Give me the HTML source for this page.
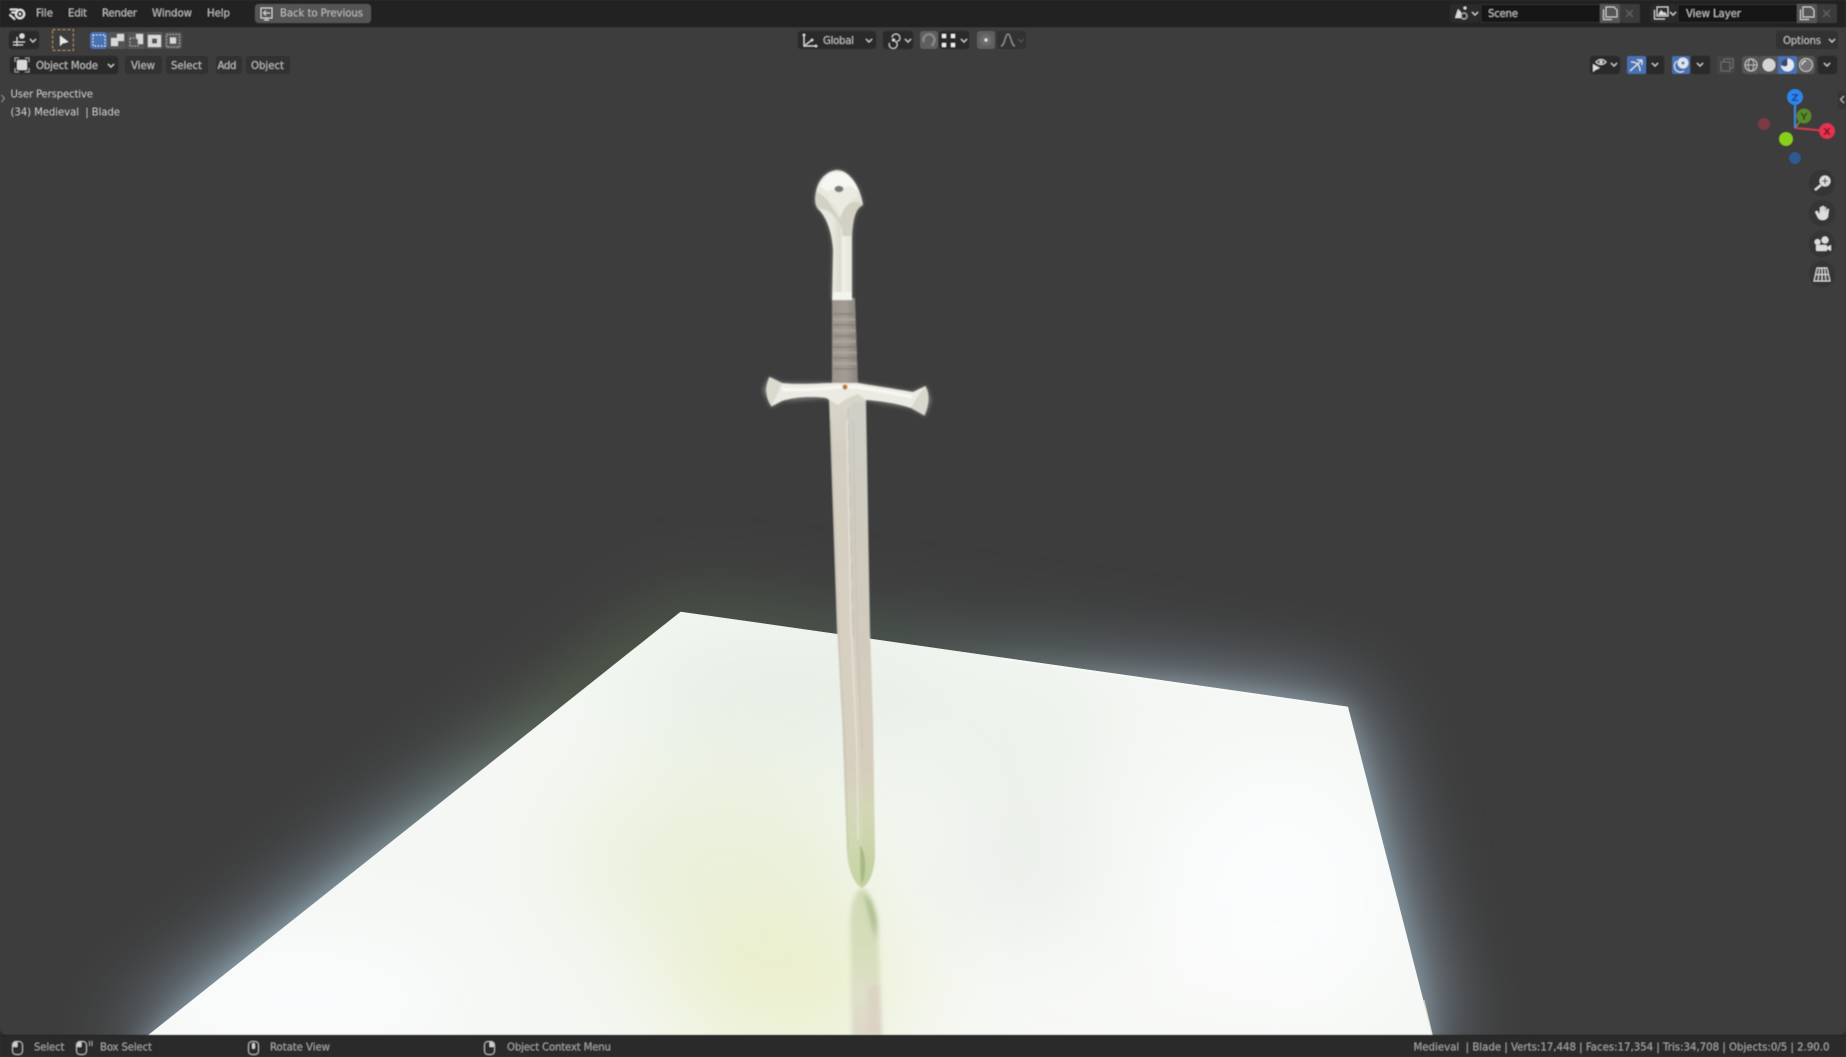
<!DOCTYPE html>
<html><head><meta charset="utf-8"><title>Blender</title>
<style>
html,body{margin:0;padding:0;background:#3d3d3d;width:1846px;height:1057px;overflow:hidden}
svg{display:block}
text{font-family:"DejaVu Sans","Liberation Sans",sans-serif;font-size:10.2px;fill:#bcbcbc}
.st text{fill:#a2a2a2}
.vt{fill:#d4d4d4}
</style></head><body>
<svg xmlns="http://www.w3.org/2000/svg" width="1846" height="1057" viewBox="0 0 1846 1057">
<defs>
<filter id="g38" filterUnits="userSpaceOnUse" x="0" y="0" width="1846" height="1057" color-interpolation-filters="sRGB"><feOffset dy="200"/><feGaussianBlur stdDeviation="44"/></filter>
<filter id="g14" filterUnits="userSpaceOnUse" x="0" y="0" width="1846" height="1057" color-interpolation-filters="sRGB"><feOffset dy="200"/><feGaussianBlur stdDeviation="12"/></filter>
<filter id="b2" x="-30%" y="-30%" width="160%" height="160%"><feGaussianBlur stdDeviation="2.4"/></filter>
<filter id="b1" x="-30%" y="-30%" width="160%" height="160%"><feGaussianBlur stdDeviation="1"/></filter>
<filter id="soft" x="-2%" y="-2%" width="104%" height="104%"><feGaussianBlur stdDeviation="0.5"/></filter>
<filter id="swsoft" x="-10%" y="-10%" width="120%" height="120%"><feGaussianBlur stdDeviation="0.8"/></filter>
<filter id="blob" x="-100%" y="-100%" width="300%" height="300%"><feGaussianBlur stdDeviation="50"/></filter>
<clipPath id="plane"><path d="M680.6 611.7L1348 706.7L1432.5 1036L147 1036Z"/></clipPath>
<clipPath id="view"><rect x="0" y="27" width="1846" height="1009"/></clipPath>
<linearGradient id="gw" x1="147" y1="0" x2="1432" y2="0" gradientUnits="userSpaceOnUse">
<stop offset="0" stop-color="#b6d2e6"/><stop offset=".2" stop-color="#a2bfcf"/><stop offset=".33" stop-color="#66785e"/><stop offset=".45" stop-color="#566550"/><stop offset=".62" stop-color="#5a6a64"/><stop offset=".8" stop-color="#93a6b3"/><stop offset="1" stop-color="#b0c8da"/></linearGradient>
<linearGradient id="gt" x1="147" y1="0" x2="1432" y2="0" gradientUnits="userSpaceOnUse">
<stop offset="0" stop-color="#a8c4d8"/><stop offset=".2" stop-color="#8ea6aa"/><stop offset=".34" stop-color="#404a3c"/><stop offset=".6" stop-color="#434a46"/><stop offset=".82" stop-color="#b9c6ce"/><stop offset="1" stop-color="#98b0c2"/></linearGradient>
<linearGradient id="bl" x1="0" y1="395" x2="0" y2="890" gradientUnits="userSpaceOnUse">
<stop offset="0" stop-color="#d8d6cc"/><stop offset=".12" stop-color="#d3cdc0"/><stop offset=".55" stop-color="#d7d0c2"/><stop offset=".76" stop-color="#d6cfc0"/><stop offset=".86" stop-color="#d3d9b8"/><stop offset="1" stop-color="#c5d3a2"/></linearGradient>
<linearGradient id="br" x1="0" y1="395" x2="0" y2="890" gradientUnits="userSpaceOnUse">
<stop offset="0" stop-color="#cfcfc8"/><stop offset=".3" stop-color="#cfcbbe"/><stop offset=".76" stop-color="#d6ccbc"/><stop offset=".84" stop-color="#d3d7b4"/><stop offset="1" stop-color="#bfcf9a"/></linearGradient>
<linearGradient id="rf" x1="0" y1="888" x2="0" y2="1036" gradientUnits="userSpaceOnUse">
<stop offset="0" stop-color="#d0dbb6"/><stop offset=".4" stop-color="#d5debb"/><stop offset=".72" stop-color="#dfdfc9"/><stop offset="1" stop-color="#dcd6c8"/></linearGradient>
<linearGradient id="gr" x1="832" y1="0" x2="858" y2="0" gradientUnits="userSpaceOnUse">
<stop offset="0" stop-color="#98938c"/><stop offset=".5" stop-color="#a39c94"/><stop offset="1" stop-color="#8a847c"/></linearGradient>
<linearGradient id="hd" x1="832" y1="0" x2="852" y2="0" gradientUnits="userSpaceOnUse">
<stop offset="0" stop-color="#e8e8df"/><stop offset=".4" stop-color="#dcdbcf"/><stop offset=".55" stop-color="#f1f0e9"/><stop offset="1" stop-color="#e4e3da"/></linearGradient>
</defs>

<rect width="1846" height="1057" fill="#3d3d3d"/>

<!-- glow: source geometry sits 200px above the final place and is shifted by the filter -->
<g clip-path="url(#view)">
<path d="M680.6 411.7L1348 506.7L1432.5 836L1450 950L60 950L147 836Z" fill="url(#gw)" filter="url(#g38)"/>
<path d="M680.6 411.7L1348 506.7L1432.5 836L1450 950L60 950L147 836Z" fill="url(#gt)" filter="url(#g14)" opacity=".45"/>
</g>

<!-- plane -->
<path d="M680.6 611.7L1348 706.7L1432.5 1036L147 1036Z" fill="#f4f7f3"/>
<g clip-path="url(#plane)">
<g filter="url(#blob)">
<ellipse cx="790" cy="690" rx="170" ry="50" fill="#e4ede2"/>
<ellipse cx="1000" cy="720" rx="120" ry="40" fill="#e9efe7"/>
<ellipse cx="720" cy="860" rx="150" ry="90" fill="#eaf0da"/>
<ellipse cx="790" cy="985" rx="130" ry="70" fill="#ebefca"/>
<ellipse cx="1020" cy="860" rx="60" ry="80" fill="#e9ede8"/>
<ellipse cx="1280" cy="900" rx="130" ry="150" fill="#fbfcfd"/>
<ellipse cx="300" cy="1000" rx="170" ry="55" fill="#fdfdff"/>
<ellipse cx="1120" cy="1010" rx="220" ry="40" fill="#f9faf8"/>
</g>
<path d="M1000 657L1348 706.7" stroke="#fff" stroke-width="3" opacity=".6" filter="url(#b1)"/>
</g>
<path d="M1424 1000L1432.5 1036" stroke="#e9edc8" stroke-width="1.2" opacity=".7"/>

<!-- reflection -->
<g filter="url(#b2)">
<path d="M862 888C854 892 851 905 850 920L852 1036L882 1036L878 925C877 905 870 892 862 888Z" fill="url(#rf)"/>
<path d="M864 893C870 898 875 908 877 922L876 940C872 928 868 910 864 893Z" fill="#8aa36c" opacity=".55"/>
<path d="M868 985L880 985L882 1036L868 1036Z" fill="#d9cfc2" opacity=".75"/>
</g>

<!-- sword -->
<g filter="url(#swsoft)">
<path d="M837 170C848 170 860 184 863 205C856 208 853 218 852 236L852 300L832 300L833 250C832 232 826 216 818 209C814 204 815 196 816 192C818 180 826 171 837 170Z" fill="#fff" opacity=".3" filter="url(#b2)"/>
<path d="M769 377L782 383L858 383L913 392L926 386L931 400L925 416L911 408L866 400L845 412L826 398L782 401L771 407L763 390Z" fill="#fff" opacity=".35" filter="url(#b2)"/>

<!-- blade -->
<path d="M829 398L837 630L842 720L847 853C848 870 855 885 862 888L860 720L853 630L848 398Z" fill="url(#bl)"/>
<path d="M848 398L853 630L860 720L862 888C870 883 875 870 875 853L873 720L870 630L866 398Z" fill="url(#br)"/>
<path d="M847 420L851 630L857 750L858 840" stroke="#e8e4da" stroke-width="1.8" fill="none" opacity=".7"/>
<path d="M853 420L857 630L862 750" stroke="#bdb7aa" stroke-width="1" fill="none" opacity=".5"/>
<path d="M831 420L839 640L844 730L848 850" stroke="#c3bdae" stroke-width="1.2" fill="none" opacity=".6"/>
<path d="M860 845C860 860 860 875 861 884C865 878 866 868 865 860C864 852 862 848 860 845Z" fill="#8fa668" opacity=".55"/>

<!-- grip -->
<path d="M832 298L855 298L858 385L832 385Z" fill="url(#gr)"/>
<g stroke="#7f7971" stroke-width="1.6" opacity=".7">
<path d="M833 314L856 314M833 325L856 325M833 336L857 336M833 347L857 347M833 358L857 358M833 369L858 369"/>
</g>
<g stroke="#b4aea6" stroke-width="2.2" opacity=".6">
<path d="M833 319.5L855 319.5M833 330.5L856 330.5M833 341.5L856 341.5M833 352.5L857 352.5M833 363.5L857 363.5"/>
</g>

<!-- pommel and handle -->
<path d="M837 170C848 170 860 184 863 205C856 208 853 218 852 236L852 300L832 300L833 250C832 232 826 216 818 209C814 204 815 196 816 192C818 180 826 171 837 170Z" fill="url(#hd)"/>
<path d="M816 192C824 194 832 204 839 220C842 208 852 196 863 205C856 208 853 218 851 236L842 236C843 230 842 226 838 222C834 214 826 208 818 209C815 204 815 196 816 192Z" fill="#d2d1c3"/>
<path d="M826 190L852 184C856 188 858 194 857 197C850 200 843 208 840 218C836 206 831 197 826 190Z" fill="#ecebe2"/>
<path d="M837 172C846 172 855 180 859 192L851 186L826 191L820 186C824 177 830 172 837 172Z" fill="#f7f7f2"/>
<ellipse cx="839" cy="189" rx="4.5" ry="3.2" fill="#74747a"/>
<path d="M833 292L852 292L852 300L832 300Z" fill="#f4f4ee"/>

<!-- guard -->
<path d="M769.5 377Q776 380 782 383C800 385 820 383 832 383L858 383C870 385 890 388 913 392L925.5 386Q932 398 924.5 415.5L911 408C895 403 880 401 866 400L853 403L845 412L838 405L826 398C810 396 795 397 782 401L771.5 406.5Q762 392 769.5 377Z" fill="#ecebe3"/>
<path d="M769.5 377Q776 380 782 383L778 393L771.5 406.5Q762 392 769.5 377Z" fill="#dbdacf"/>
<path d="M925.5 386Q932 398 924.5 415.5L911 408L917 397Z" fill="#d9d8cd"/>
<path d="M838 405L845 412L853 403L866 400L858 394L846 399Z" fill="#d7d5c8"/>
<path d="M782 389C800 391 820 389 838 387L856 387C870 389 890 392 912 397" stroke="#f8f8f4" stroke-width="3" fill="none"/>
<circle cx="845" cy="387" r="2.6" fill="#c08a3e"/><circle cx="845" cy="387" r="1.1" fill="#a4511f"/>
</g>

<!-- UI -->
<g filter="url(#soft)">
<!-- bars -->
<rect x="0" y="0" width="1846" height="26" fill="#212121"/>
<rect x="0" y="26" width="1846" height="1" fill="#1a1a1a"/>
<rect x="0" y="1036" width="1846" height="21" fill="#2b2b2b"/>
<rect x="0" y="1035" width="1846" height="1.2" fill="#222"/>
<path d="M0 1028Q0 1035 7 1035L0 1035ZM1846 1028Q1846 1035 1839 1035L1846 1035Z" fill="#2b2b2b"/>

<!-- blender logo -->
<g fill="none" stroke="#e6e6e6">
<circle cx="20" cy="14" r="4.2" stroke-width="2"/>
<path d="M10.5 9.5L17 9.5M12 12.5L17 12.5M10 15L14.5 19" stroke-width="1.7" stroke-linecap="round"/>
</g>
<circle cx="20" cy="14" r="1.3" fill="#e6e6e6"/>

<text x="36" y="16.5" textLength="17">File</text>
<text x="68" y="16.5" textLength="19">Edit</text>
<text x="102" y="16.5" textLength="35">Render</text>
<text x="152" y="16.5" textLength="40">Window</text>
<text x="207" y="16.5" textLength="23">Help</text>

<rect x="255" y="4" width="116" height="19" rx="3.5" fill="#545454"/>
<path d="M261 8H272V18H261ZM264 20H269M266.5 18V20M270 13H264M266 10.5L263.5 13L266 15.5" fill="none" stroke="#d6d6d6" stroke-width="1"/>
<text x="280" y="16.5" textLength="83">Back to Previous</text>

<!-- scene -->
<rect x="1450" y="4" width="30" height="19" rx="3" fill="#2c2c2c"/>
<rect x="1481" y="4.5" width="119" height="18" fill="#191919" stroke="#333"/>
<rect x="1600" y="4" width="20" height="19" fill="#545454"/>
<rect x="1620" y="4" width="20" height="19" rx="2" fill="#3a3a3a"/>
<path d="M1455 18L1458 9L1461 12L1462 18Z" fill="#d8d8d8"/><circle cx="1464" cy="16" r="3" fill="none" stroke="#bbb"/><circle cx="1465" cy="8" r="1.5" fill="#ddd"/>
<path d="M1472 12L1475 15L1478 12" fill="none" stroke="#ccc" stroke-width="1.2"/>
<text x="1488" y="17" textLength="30">Scene</text>
<path d="M1606 7H1614L1617 10V17H1606ZM1603.5 9.5V19.5H1612" fill="none" stroke="#cfcfcf" stroke-width="1"/>
<path d="M1626 10L1633 17M1633 10L1626 17" stroke="#666" stroke-width="1.2"/>

<rect x="1650" y="4" width="27" height="19" rx="3" fill="#2c2c2c"/>
<rect x="1678" y="4.5" width="119" height="18" fill="#191919" stroke="#333"/>
<rect x="1797" y="4" width="20" height="19" fill="#545454"/>
<rect x="1817" y="4" width="20" height="19" rx="2" fill="#3a3a3a"/>
<path d="M1657 7H1668V16H1657ZM1654.5 10V19H1665" fill="none" stroke="#cfcfcf"/><path d="M1658 15L1661 10L1664 13L1665 12L1667 15Z" fill="#ddd"/>
<path d="M1670 12L1673 15L1676 12" fill="none" stroke="#ccc" stroke-width="1.2"/>
<text x="1686" y="17" textLength="55">View Layer</text>
<path d="M1803 7H1811L1814 10V17H1803ZM1800.5 9.5V19.5H1809" fill="none" stroke="#cfcfcf" stroke-width="1"/>
<path d="M1823 10L1830 17M1830 10L1823 17" stroke="#666" stroke-width="1.2"/>

<!-- row 2 -->
<rect x="9" y="31" width="30" height="18" rx="3" fill="#2c2c2c"/>
<path d="M13 42H25M17 37V46M13 45H23" stroke="#ccc" stroke-width="1" fill="none"/><circle cx="22" cy="36" r="2.6" fill="#ddd"/>
<path d="M30 39L33 42L36 39" fill="none" stroke="#ccc" stroke-width="1.2"/>
<rect x="52.5" y="29.5" width="21" height="21" fill="#3d3d3d" stroke="#bb9355" stroke-dasharray="3 2"/>
<path d="M60 35.5V46L62.5 43.5L68.5 42Z" fill="#e8e8e8"/>
<rect x="90" y="32" width="17.5" height="17" rx="3" fill="#4772b3"/>
<rect x="93" y="35" width="12" height="11" fill="none" stroke="#e4e4e4" stroke-dasharray="1.6 1.6"/>
<rect x="108" y="32" width="18" height="17" fill="#545454"/>
<path d="M111 38H117V34H124V41H118V46H111Z" fill="#d8d8d8"/>
<rect x="127" y="32" width="18" height="17" fill="#545454"/>
<path d="M136 34H143V44H138V39H136Z" fill="#d8d8d8"/><rect x="130" y="38" width="8" height="8" fill="none" stroke="#aaa" stroke-dasharray="1.5 1.5"/>
<rect x="146" y="32" width="17" height="17" fill="#545454"/>
<path d="M148 35H161V47H148ZM152 38.5V43.5H157V38.5Z" fill="#d8d8d8" fill-rule="evenodd"/>
<rect x="164" y="32" width="18" height="17" rx="3" fill="#545454"/>
<rect x="170" y="37.5" width="6" height="6" fill="#d8d8d8"/><rect x="166.5" y="34.5" width="13" height="12.5" fill="none" stroke="#aaa" stroke-dasharray="1.5 1.5"/>

<rect x="798" y="31" width="78" height="18" rx="3" fill="#2c2c2c"/>
<path d="M804 35V46H816M804 46L812 40" stroke="#d2d2d2" stroke-width="1.2" fill="none"/><circle cx="804" cy="35" r="1.3" fill="#ddd"/><circle cx="816" cy="46" r="1.3" fill="#ddd"/><circle cx="812" cy="40" r="1.3" fill="#ddd"/>
<text x="823" y="44" textLength="31">Global</text>
<path d="M866 39L869 42L872 39" fill="none" stroke="#ccc" stroke-width="1.2"/>
<rect x="883" y="31" width="30" height="18" rx="3" fill="#2c2c2c"/>
<path d="M892 37.5A3.8 3.8 0 0 1 895.5 34A4 4 0 0 1 899 40.5L897 41.5M895 41A4 4 0 1 1 889.5 43" fill="none" stroke="#d2d2d2" stroke-width="1"/><circle cx="893.5" cy="40" r="1.5" fill="#ddd"/>
<path d="M905 39L908 42L911 39" fill="none" stroke="#ccc" stroke-width="1.2"/>
<rect x="920" y="31" width="18" height="18" rx="3" fill="#5f5f5f"/>
<path d="M924 42A5.5 5.5 0 1 1 934 42L932 46" fill="none" stroke="#8a8a8a" stroke-width="2.2"/>
<rect x="939" y="31" width="30" height="18" rx="3" fill="#2c2c2c"/>
<g fill="#eee"><rect x="942" y="34" width="4" height="4"/><rect x="951" y="34" width="4" height="4"/><rect x="942" y="43" width="4" height="4"/><rect x="951" y="43" width="4" height="4"/></g>
<path d="M961 39L964 42L967 39" fill="none" stroke="#ccc" stroke-width="1.2"/>
<rect x="977" y="31" width="18" height="18" rx="3" fill="#5f5f5f"/>
<circle cx="986" cy="40" r="6" fill="#6c6c6c"/><circle cx="986" cy="40" r="1.7" fill="#ddd"/>
<rect x="997" y="31" width="29" height="18" rx="3" fill="#333"/>
<path d="M1001 46C1005 46 1005 34 1008 34C1011 34 1011 46 1015 46" fill="none" stroke="#9a9a9a" stroke-width="1.1"/>
<path d="M1018 39L1021 42L1024 39" fill="none" stroke="#555" stroke-width="1.2"/>

<rect x="1776" y="31" width="62" height="18" rx="3" fill="#333"/>
<text x="1783" y="44" textLength="38">Options</text>
<path d="M1829 39L1832 42L1835 39" fill="none" stroke="#ccc" stroke-width="1.2"/>

<!-- row 3 -->
<rect x="10" y="56" width="108" height="18" rx="3" fill="#2c2c2c"/>
<rect x="17" y="60" width="10" height="10" fill="#d8d8d8" rx="1"/>
<path d="M15 62V58H19M25 58H29V62M29 68V72H25M19 72H15V68" fill="none" stroke="#999"/>
<text x="36" y="69" textLength="62">Object Mode</text>
<path d="M108 64L111 67L114 64" fill="none" stroke="#ccc" stroke-width="1.2"/>
<rect x="125" y="56" width="37" height="18" rx="3" fill="#333"/><text x="131" y="69" textLength="24">View</text>
<rect x="166" y="56" width="42" height="18" rx="3" fill="#333"/><text x="171" y="69" textLength="31">Select</text>
<rect x="216" y="56" width="26" height="18" rx="3" fill="#333"/><text x="217.5" y="69" textLength="19">Add</text>
<rect x="246" y="56" width="44" height="18" rx="3" fill="#333"/><text x="251" y="69" textLength="33">Object</text>

<rect x="1590" y="56" width="30" height="18" rx="3" fill="#2c2c2c"/>
<path d="M1596 62Q1601 57 1606 62Q1601 67 1596 62Z" fill="none" stroke="#ddd"/><circle cx="1601" cy="62" r="1.6" fill="#ddd"/><path d="M1593 64V72L1595.5 70L1600 68Z" fill="#ddd"/>
<path d="M1611 63L1614 66L1617 63" fill="none" stroke="#ccc" stroke-width="1.2"/>
<rect x="1627" y="56" width="19" height="18" rx="2" fill="#4772b3"/>
<path d="M1630 71L1642 60M1642 60L1637 60M1642 60V65M1631 62Q1640 62 1640 71" fill="none" stroke="#e0e0e0" stroke-width="1.2"/>
<rect x="1646" y="56" width="18" height="18" rx="2" fill="#2c2c2c"/>
<path d="M1652 63L1655 66L1658 63" fill="none" stroke="#ccc" stroke-width="1.2"/>
<rect x="1672" y="56" width="18" height="18" rx="2" fill="#4772b3"/>
<circle cx="1683" cy="63" r="5.5" fill="#dfe3ea"/><circle cx="1683" cy="63" r="1.5" fill="#4772b3"/><path d="M1677 61A6 6 0 1 0 1684 71" fill="none" stroke="#d6dbe4" stroke-width="1.2"/>
<rect x="1691" y="56" width="19" height="18" rx="2" fill="#2c2c2c"/>
<path d="M1697 63L1700 66L1703 63" fill="none" stroke="#ccc" stroke-width="1.2"/>
<rect x="1717" y="56" width="18" height="18" rx="2" fill="#454545"/>
<path d="M1721 62H1730V71H1721ZM1724 62V59H1733V68H1730" fill="none" stroke="#6e6e6e"/>
<rect x="1742" y="56" width="18" height="18" rx="3" fill="#545454"/>
<circle cx="1751" cy="65" r="6" fill="none" stroke="#c8c8c8"/><ellipse cx="1751" cy="65" rx="2.8" ry="6" fill="none" stroke="#c8c8c8" stroke-width=".8"/><path d="M1745 65H1757" stroke="#c8c8c8" stroke-width=".8"/>
<rect x="1760" y="56" width="18" height="18" fill="#545454"/>
<circle cx="1769" cy="65" r="6.5" fill="#d4d4d4"/>
<rect x="1778" y="56" width="19" height="18" fill="#4772b3"/>
<circle cx="1787.5" cy="65" r="6.5" fill="#e4e7ec"/><path d="M1787.5 58.5A6.5 6.5 0 0 0 1781 65C1784 67 1786 67 1787.5 65Z" fill="#30486f"/>
<rect x="1797" y="56" width="18" height="18" rx="3" fill="#545454"/>
<circle cx="1806" cy="65" r="6.5" fill="#757575" stroke="#c4c4c4"/><path d="M1802 65A4 4 0 0 1 1806 61" fill="none" stroke="#e4e4e4" stroke-width="1.2"/>
<rect x="1818" y="56" width="19" height="18" rx="3" fill="#2c2c2c"/>
<path d="M1824 63L1827 66L1830 63" fill="none" stroke="#ccc" stroke-width="1.2"/>

<path d="M1.5 95L4.5 98.5L1.5 102" fill="none" stroke="#999" stroke-width="1"/>
<text class="vt" x="10.5" y="97.5" textLength="82.5">User Perspective</text>
<text class="vt" x="10.5" y="115.5" textLength="109.5" xml:space="preserve">(34) Medieval  | Blade</text>

<!-- gizmo -->
<rect x="1838" y="91" width="8" height="18" rx="3" fill="#353535"/>
<path d="M1844 96L1840.5 99.5L1844 103" fill="none" stroke="#bbb" stroke-width="1"/>
<circle cx="1764" cy="124" r="6" fill="#7c3a44"/>
<circle cx="1795" cy="158" r="6" fill="#2f5a90"/>
<path d="M1795 128L1804 116" stroke="#5e8a2a" stroke-width="2"/>
<circle cx="1804" cy="116" r="7.5" fill="#5c8a2a"/>
<text x="1804" y="120" text-anchor="middle" style="font-size:10px;fill:#33501a;font-weight:bold">Y</text>
<path d="M1795 128V97" stroke="#3e88e0" stroke-width="2.2"/>
<path d="M1795 128L1827 131" stroke="#c83a50" stroke-width="2.2"/>
<circle cx="1795" cy="97" r="8" fill="#2f84ee"/>
<text x="1795" y="101" style="font-size:10px;fill:#174a8c;font-weight:bold" text-anchor="middle">Z</text>
<circle cx="1827" cy="131" r="8" fill="#e6304f"/>
<text x="1827" y="135" style="font-size:10px;fill:#7e1325;font-weight:bold" text-anchor="middle">X</text>
<circle cx="1786" cy="139" r="7" fill="#88cf1e"/>

<!-- nav -->
<g fill="#343434"><circle cx="1822" cy="183" r="13"/><circle cx="1822" cy="213" r="13"/><circle cx="1822" cy="244" r="13"/><circle cx="1822" cy="274" r="13"/></g>
<circle cx="1825" cy="181" r="5.5" fill="#dcdcdc"/><path d="M1821 185L1815 190" stroke="#dcdcdc" stroke-width="2.2"/><path d="M1822 181H1828M1825 178V184" stroke="#333" stroke-width="1.1"/>
<path d="M1815 212L1818 218C1820 221 1826 221 1828 217L1829 209H1827L1826 212V207H1824.5L1824 212V206H1822L1821.8 212V207H1820L1819.5 214L1817 210.5Z" fill="#dcdcdc"/>
<circle cx="1817.5" cy="242" r="3" fill="#dcdcdc"/><circle cx="1825" cy="240" r="3.6" fill="#dcdcdc"/><rect x="1816" y="245" width="11" height="6" rx="1" fill="#dcdcdc"/><path d="M1827 247L1831 245V251L1827 249Z" fill="#dcdcdc"/>
<path d="M1817 268H1827L1830 281H1814ZM1822 268V281M1815.5 274.5H1828.5M1819.5 268L1818 281M1824.5 268L1826 281" fill="#444" stroke="#dcdcdc" stroke-width="1"/>

<!-- status -->
<g class="st">
<g fill="none" stroke="#b0b0b0">
<rect x="12.5" y="1041.5" width="10" height="13" rx="3.5"/>
<rect x="76.5" y="1041.5" width="10" height="13" rx="3.5"/>
<path d="M89.5 1041V1046M92 1041V1046" stroke-width=".8"/>
<rect x="248.5" y="1041.5" width="10" height="13" rx="3.5"/>
<rect x="484.5" y="1041.5" width="10" height="13" rx="3.5"/>
</g>
<g fill="#cfcfcf">
<path d="M13 1045V1044.5A3 3 0 0 1 17.5 1042V1047H13Z"/>
<path d="M77 1045V1044.5A3 3 0 0 1 81.5 1042V1047H77Z"/>
<rect x="252" y="1043" width="3" height="6" rx="1.2"/>
<path d="M489.5 1042A3 3 0 0 1 494 1044.5V1047H489.5Z"/>
</g>
<text x="34" y="1050.5" textLength="30.5">Select</text>
<text x="100" y="1050.5" textLength="52">Box Select</text>
<text x="270" y="1050.5" textLength="60">Rotate View</text>
<text x="507" y="1050.5" textLength="104">Object Context Menu</text>
<text x="1413.5" y="1050.5" textLength="416" xml:space="preserve">Medieval  | Blade | Verts:17,448 | Faces:17,354 | Tris:34,708 | Objects:0/5 | 2.90.0</text>
</g>
</g>
</svg>
</body></html>
